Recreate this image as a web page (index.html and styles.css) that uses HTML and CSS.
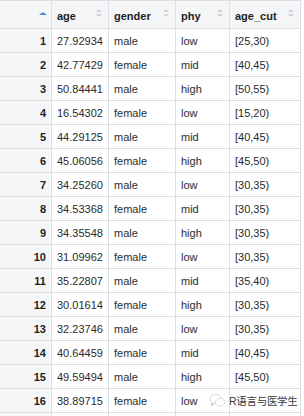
FILE: index.html
```html
<!DOCTYPE html>
<html lang="en">
<head>
<meta charset="utf-8">
<title>Data viewer</title>
<link rel="stylesheet" href="styles.css">
</head>
<body>
<div class="viewer">
  <div class="grid" role="table">
    <div class="cell head rowno"><span class="sort-active"></span></div>
    <div class="cell head"><span>age</span><span class="sort"></span></div>
    <div class="cell head"><span>gender</span><span class="sort"></span></div>
    <div class="cell head"><span>phy</span><span class="sort"></span></div>
    <div class="cell head"><span>age_cut</span><span class="sort"></span></div>

    <div class="cell num">1</div><div class="cell">27.92934</div><div class="cell">male</div><div class="cell">low</div><div class="cell">[25,30)</div>
    <div class="cell num">2</div><div class="cell">42.77429</div><div class="cell">female</div><div class="cell">mid</div><div class="cell">[40,45)</div>
    <div class="cell num">3</div><div class="cell">50.84441</div><div class="cell">male</div><div class="cell">high</div><div class="cell">[50,55)</div>
    <div class="cell num">4</div><div class="cell">16.54302</div><div class="cell">female</div><div class="cell">low</div><div class="cell">[15,20)</div>
    <div class="cell num">5</div><div class="cell">44.29125</div><div class="cell">male</div><div class="cell">mid</div><div class="cell">[40,45)</div>
    <div class="cell num">6</div><div class="cell">45.06056</div><div class="cell">female</div><div class="cell">high</div><div class="cell">[45,50)</div>
    <div class="cell num">7</div><div class="cell">34.25260</div><div class="cell">male</div><div class="cell">low</div><div class="cell">[30,35)</div>
    <div class="cell num">8</div><div class="cell">34.53368</div><div class="cell">female</div><div class="cell">mid</div><div class="cell">[30,35)</div>
    <div class="cell num">9</div><div class="cell">34.35548</div><div class="cell">male</div><div class="cell">high</div><div class="cell">[30,35)</div>
    <div class="cell num">10</div><div class="cell">31.09962</div><div class="cell">female</div><div class="cell">low</div><div class="cell">[30,35)</div>
    <div class="cell num">11</div><div class="cell">35.22807</div><div class="cell">male</div><div class="cell">mid</div><div class="cell">[35,40)</div>
    <div class="cell num">12</div><div class="cell">30.01614</div><div class="cell">female</div><div class="cell">high</div><div class="cell">[30,35)</div>
    <div class="cell num">13</div><div class="cell">32.23746</div><div class="cell">male</div><div class="cell">low</div><div class="cell">[30,35)</div>
    <div class="cell num">14</div><div class="cell">40.64459</div><div class="cell">female</div><div class="cell">mid</div><div class="cell">[40,45)</div>
    <div class="cell num">15</div><div class="cell">49.59494</div><div class="cell">male</div><div class="cell">high</div><div class="cell">[45,50)</div>
    <div class="cell num">16</div><div class="cell">38.89715</div><div class="cell">female</div><div class="cell">low</div><div class="cell"></div>
    <div class="cell num"></div><div class="cell"></div><div class="cell"></div><div class="cell"></div><div class="cell"></div>
  </div>

  <div class="watermark">
    <svg class="wm-icon" width="17" height="15" viewBox="0 0 17 15" aria-hidden="true">
      <ellipse cx="6.5" cy="6" rx="5.5" ry="4.6" fill="none" stroke="#c4c4c4" stroke-width="1" stroke-dasharray="2 1.2"/>
      <ellipse cx="11" cy="9.3" rx="4.6" ry="3.8" fill="#fff" stroke="#c4c4c4" stroke-width="1" stroke-dasharray="2 1.2"/>
      <path d="M3 10 L2.2 12.6 L5 11" fill="none" stroke="#c4c4c4" stroke-width="1"/>
    </svg>
    <span class="wm-text">R语言与医学生</span>
  </div>
</div>
</body>
</html>
```

FILE: styles.css
```css
html, body {
  margin: 0;
  padding: 0;
  background: #ffffff;
}

.viewer {
  position: relative;
  width: 304px;
  height: 416px;
  overflow: hidden;
  font-family: "Liberation Sans", Arial, sans-serif;
  font-size: 11px;
  color: #2b2b2b;
}

.grid {
  display: grid;
  grid-template-columns: 52px 57px 67px 54px 71px;
  grid-template-rows: 28px;
  grid-auto-rows: 24px;
  width: 301px;
  border-top: 1px solid #dcdfe3;
}

.cell {
  box-sizing: border-box;
  border-right: 1px solid #dcdfe3;
  border-bottom: 1px solid #dcdfe3;
  padding: 0 4px 0 5px;
  display: flex;
  align-items: center;
  white-space: nowrap;
  overflow: hidden;
}

.head {
  background: #f5f6f8;
  font-weight: bold;
  color: #1e1e1e;
  justify-content: space-between;
  padding-top: 2px;
  padding-right: 6px;
}

.rowno {
  justify-content: flex-end;
  padding-right: 4px;
}

.num {
  background: #f5f6f8;
  justify-content: flex-end;
  font-weight: bold;
  color: #1e1e1e;
  padding-right: 5px;
}

.sort {
  align-self: flex-start;
  margin-top: 6px;
  width: 0;
  height: 0;
  position: relative;
  border-left: 3px solid transparent;
  border-right: 3px solid transparent;
  border-bottom: 3px solid #cfd2d6;
}

.sort::after {
  content: "";
  position: absolute;
  left: -3px;
  top: 5px;
  border-left: 3px solid transparent;
  border-right: 3px solid transparent;
  border-top: 3px solid #cfd2d6;
}

.sort-active {
  align-self: flex-start;
  margin-top: 9px;
  width: 0;
  height: 0;
  border-left: 4px solid transparent;
  border-right: 4px solid transparent;
  border-bottom: 3px solid #3b8ee0;
}

.watermark {
  position: absolute;
  left: 209px;
  top: 393px;
  display: flex;
  align-items: center;
  gap: 3px;
}

.wm-text {
  font-family: "Liberation Sans", "Noto Sans CJK SC", sans-serif;
  font-size: 10.5px;
  color: #3a3a3a;
  letter-spacing: -0.3px;
  text-shadow: 0 0 1px #fff, 0 0 1px #fff;
}
```
